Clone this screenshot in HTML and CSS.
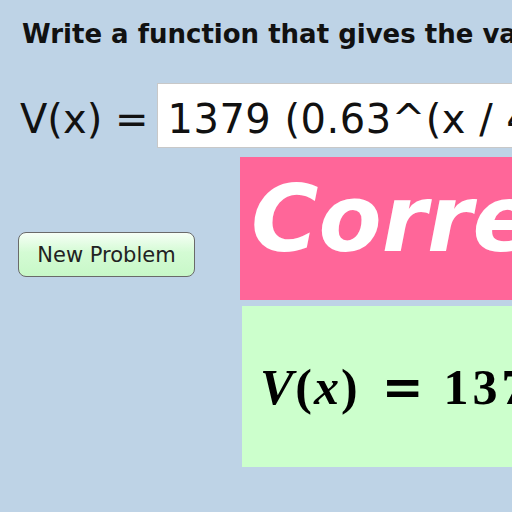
FILE: index.html
```html
<!DOCTYPE html>
<html>
<head>
<meta charset="utf-8">
<link rel="stylesheet" href="styles.css">
</head>
<body>
<div class="page">
  <h1 class="prompt">Write a function that gives the value of the car after x years.</h1>
  <div class="answer-row">
    <span class="label">V(x) =</span>
    <div class="answer-input">1379 (0.63^(x / 4))</div>
  </div>
  <div class="feedback-row">
    <div class="side">
      <button class="new-btn" type="button">New Problem</button>
    </div>
    <div class="results">
      <div class="verdict">Correct!</div>
      <div class="math"><span class="mi">V</span><span class="mo">(</span><span class="mi">x</span><span class="mo">)</span><span class="eq">=</span><span class="mn">1379</span><span class="mo">(</span><span class="mn">0.63</span><span class="mo">)</span></div>
    </div>
  </div>
</div>
</body>
</html>
```

FILE: styles.css
```css
html, body {
  margin: 0;
  padding: 0;
  background: #bed3e6;
  overflow: hidden;
}

.page {
  width: 900px;
  padding: 19px 0 0 18px;
  font-family: "DejaVu Sans", "Liberation Sans", sans-serif;
  color: #111;
}

.prompt {
  margin: 0 0 34px 4px;
  font-size: 26px;
  line-height: 30px;
  font-weight: bold;
  white-space: nowrap;
}

.answer-row {
  display: flex;
  align-items: baseline;
  gap: 9px;
}

.label {
  margin-left: 2px;
  font-size: 40px;
  white-space: nowrap;
}

.answer-input {
  width: 600px;
  box-sizing: content-box;
  padding: 8px 0 0 9px;
  height: 55px;
  line-height: 55px;
  font-size: 40px;
  letter-spacing: 0.5px;
  background: #fff;
  border: 1px solid #c8c8c8;
  white-space: nowrap;
}

.feedback-row {
  display: flex;
  margin-top: 9px;
}

.side {
  width: 222px;
  flex: none;
}

.new-btn {
  margin-top: 75px;
  width: 177px;
  height: 45px;
  padding: 0;
  font-family: "DejaVu Sans", sans-serif;
  font-size: 21px;
  color: #222;
  border: 1.5px solid #6a6a6a;
  border-radius: 8px;
  background: linear-gradient(#f6fff6 0%, #d4fbd4 45%, #c8f8c8 100%);
}

.results {
  flex: none;
}

.verdict {
  width: 620px;
  height: 143px;
  box-sizing: border-box;
  padding: 13px 0 0 11px;
  background: #ff6699;
  color: #fff;
  font-size: 92px;
  line-height: 100px;
  font-weight: bold;
  font-style: oblique;
  white-space: nowrap;
}

.math {
  margin: 6px 0 0 2px;
  width: 620px;
  height: 161px;
  box-sizing: border-box;
  padding: 56px 0 0 18px;
  background: #ccffcc;
  font-family: "Liberation Serif", "DejaVu Serif", serif;
  font-weight: bold;
  font-size: 50px;
  line-height: 50px;
  color: #000;
  white-space: nowrap;
}

.mi {
  font-style: italic;
}

.mn {
  letter-spacing: 4px;
}

.math .mi + .mo,
.math .mo + .mi {
  margin-left: 2px;
}

.eq {
  font-family: "DejaVu Serif", serif;
  margin: 0 20px 0 24px;
}
```
